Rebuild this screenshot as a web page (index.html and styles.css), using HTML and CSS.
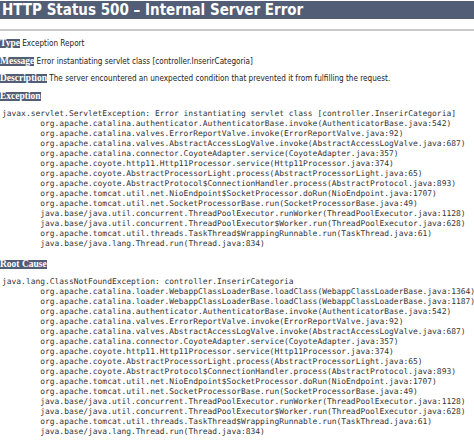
FILE: index.html
```html
<!DOCTYPE html>
<html><head>
  <meta charset="utf-8">
  <title>HTTP Status 500 – Internal Server Error</title>
  <link rel="stylesheet" href="styles.css">
</head>
<body>
<h1 class="title">HTTP Status 500 – Internal Server Error</h1>
<hr class="line">
<p class="row"><b class="tag">Type</b> Exception Report</p>
<p class="row"><b class="tag">Message</b> Error instantiating servlet class [controller.InserirCategoria]</p>
<p class="row"><b class="tag">Description</b> The server encountered an unexpected condition that prevented it from fulfilling the request.</p>
<p class="row"><b class="tag">Exception</b></p>
<pre class="trace">javax.servlet.ServletException: Error instantiating servlet class [controller.InserirCategoria]
	org.apache.catalina.authenticator.AuthenticatorBase.invoke(AuthenticatorBase.java:542)
	org.apache.catalina.valves.ErrorReportValve.invoke(ErrorReportValve.java:92)
	org.apache.catalina.valves.AbstractAccessLogValve.invoke(AbstractAccessLogValve.java:687)
	org.apache.catalina.connector.CoyoteAdapter.service(CoyoteAdapter.java:357)
	org.apache.coyote.http11.Http11Processor.service(Http11Processor.java:374)
	org.apache.coyote.AbstractProcessorLight.process(AbstractProcessorLight.java:65)
	org.apache.coyote.AbstractProtocol$ConnectionHandler.process(AbstractProtocol.java:893)
	org.apache.tomcat.util.net.NioEndpoint$SocketProcessor.doRun(NioEndpoint.java:1707)
	org.apache.tomcat.util.net.SocketProcessorBase.run(SocketProcessorBase.java:49)
	java.base/java.util.concurrent.ThreadPoolExecutor.runWorker(ThreadPoolExecutor.java:1128)
	java.base/java.util.concurrent.ThreadPoolExecutor$Worker.run(ThreadPoolExecutor.java:628)
	org.apache.tomcat.util.threads.TaskThread$WrappingRunnable.run(TaskThread.java:61)
	java.base/java.lang.Thread.run(Thread.java:834)
</pre>
<p class="row cause"><b class="tag">Root Cause</b></p>
<pre class="trace">java.lang.ClassNotFoundException: controller.InserirCategoria
	org.apache.catalina.loader.WebappClassLoaderBase.loadClass(WebappClassLoaderBase.java:1364)
	org.apache.catalina.loader.WebappClassLoaderBase.loadClass(WebappClassLoaderBase.java:1187)
	org.apache.catalina.authenticator.AuthenticatorBase.invoke(AuthenticatorBase.java:542)
	org.apache.catalina.valves.ErrorReportValve.invoke(ErrorReportValve.java:92)
	org.apache.catalina.valves.AbstractAccessLogValve.invoke(AbstractAccessLogValve.java:687)
	org.apache.catalina.connector.CoyoteAdapter.service(CoyoteAdapter.java:357)
	org.apache.coyote.http11.Http11Processor.service(Http11Processor.java:374)
	org.apache.coyote.AbstractProcessorLight.process(AbstractProcessorLight.java:65)
	org.apache.coyote.AbstractProtocol$ConnectionHandler.process(AbstractProtocol.java:893)
	org.apache.tomcat.util.net.NioEndpoint$SocketProcessor.doRun(NioEndpoint.java:1707)
	org.apache.tomcat.util.net.SocketProcessorBase.run(SocketProcessorBase.java:49)
	java.base/java.util.concurrent.ThreadPoolExecutor.runWorker(ThreadPoolExecutor.java:1128)
	java.base/java.util.concurrent.ThreadPoolExecutor$Worker.run(ThreadPoolExecutor.java:628)
	org.apache.tomcat.util.threads.TaskThread$WrappingRunnable.run(TaskThread.java:61)
	java.base/java.lang.Thread.run(Thread.java:834)
</pre>
</body></html>
```

FILE: styles.css
```css
body,html { color:#222; background:white; padding:0; margin:0; overflow:hidden; }
body { font-family:"DejaVu Sans Condensed","DejaVu Sans",sans-serif; font-size:8.1px; }

.title {
  margin: 1px 0 0;
  height: 18px;
  line-height: 18px;
  padding-left: 2px;
  background: #525d76;
  color: white;
  font-size: 15px;
  font-weight: bold;
  white-space: nowrap;
}

.line {
  margin: 10px 0 0;
  height: 2px;
  border: none;
  background: #c9c9c9;
}

.row {
  margin: 7px 0 7.5px;
  line-height: 10px;
  height: 10px;
  white-space: nowrap;
}
.cause {
  margin-top: 9.5px;
}

.tag {
  display: inline-block;
  font: bold 9.5px/9px "Liberation Serif", serif;
  background: #525d76;
  color: white;
}

.trace {
  margin: 8.5px 0 0;
  padding-left: 2px;
  font: 7.95px/10px "DejaVu Sans Mono", monospace;
  color: #333;
}
```
